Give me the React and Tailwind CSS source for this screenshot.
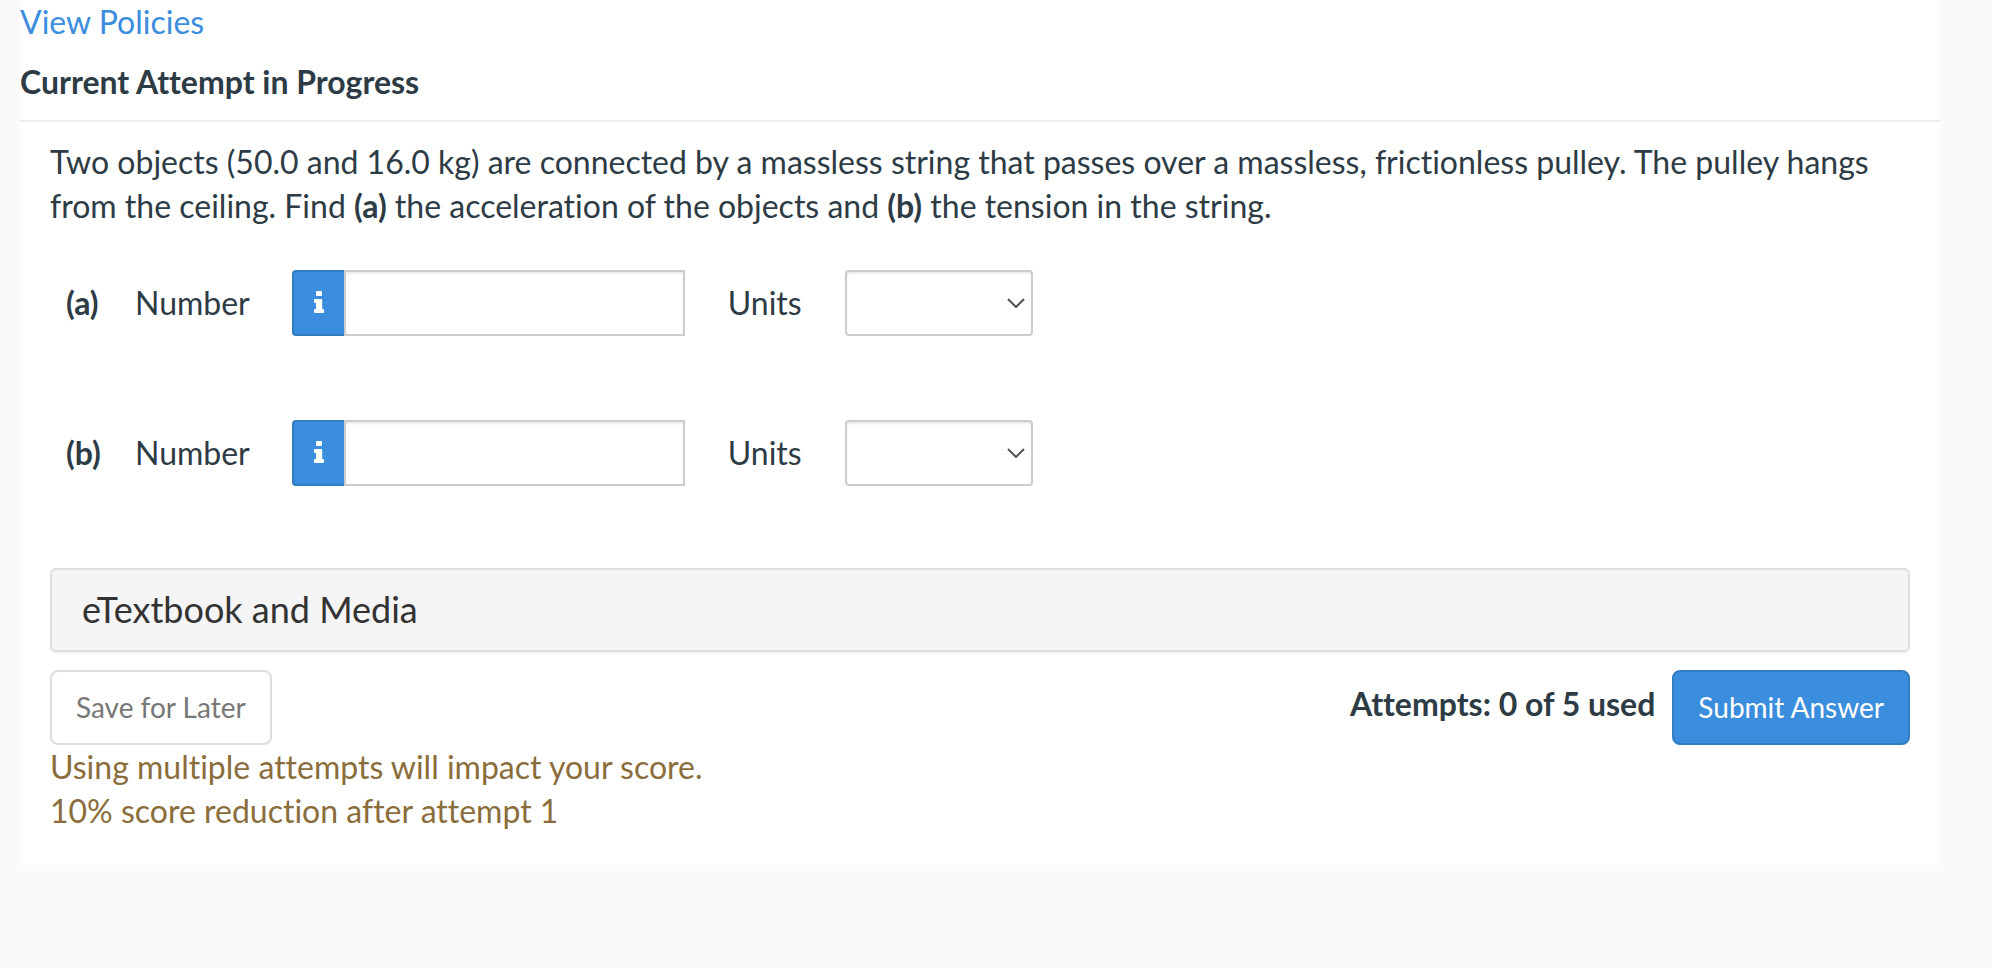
const parts = [
    { id: 'a', label: '(a)' },
    { id: 'b', label: '(b)' },
];

function InfoIcon() {
    return (
        <svg aria-hidden="true" viewBox="0 0 10 22" className="h-[22px] w-[10px] fill-white">
            <rect x="2" y="0" width="6" height="5" rx="1" />
            <path d="M1 8h6.4a.8.8 0 0 1 .8.8V18H9a1 1 0 0 1 1 1v2a1 1 0 0 1-1 1H1a1 1 0 0 1-1-1v-2a1 1 0 0 1 1-1h1v-6H1a1 1 0 0 1-1-1V9a1 1 0 0 1 1-1z" />
        </svg>
    );
}

function AnswerRow({ id, label }) {
    return (
        <div className="flex h-[66px] items-center pl-4">
            <strong className="w-[69px] font-bold">{label}</strong>
            <label htmlFor={`number-${id}`}>Number</label>

            <div className="ml-[42px] flex h-full">
                <button
                    type="button"
                    aria-label="Answer format information"
                    className="flex w-[52px] items-center justify-center rounded-l border-2 border-r-0 border-[#317dc1] bg-[#3b8ddd] pb-0.5"
                >
                    <InfoIcon />
                </button>
                <input
                    id={`number-${id}`}
                    type="text"
                    className="w-[341px] border-2 border-[#ccc] bg-white px-3 shadow-[inset_0_2px_2px_rgba(0,0,0,0.075)]"
                />
            </div>

            <label htmlFor={`units-${id}`} className="mx-[43px]">Units</label>

            <div className="relative h-full w-[188px]">
                <select
                    id={`units-${id}`}
                    className="h-full w-full appearance-none rounded border-2 border-[#ccc] bg-white px-3 shadow-[inset_0_2px_2px_rgba(0,0,0,0.075)]"
                >
                    <option value="" />
                    <option value="m/s2">m/s²</option>
                    <option value="N">N</option>
                </select>
                <svg
                    aria-hidden="true"
                    viewBox="0 0 18 10"
                    className="pointer-events-none absolute top-7 right-2 h-[10px] w-[18px] fill-none stroke-[#555] stroke-2"
                >
                    <path d="M1 1l8 8 8-8" />
                </svg>
            </div>
        </div>
    );
}

export default function App() {
    return (
        <div className="min-h-screen bg-[#fafafa] pr-[52px] pl-5 font-['Lato',sans-serif] text-[32px] leading-[44px] text-[#2d3b45] [font-variant-ligatures:none]">
            <main className="bg-white pb-8">
                <a href="#policies" className="block w-fit text-[#3b8ddd]">View Policies</a>
                <h1 className="mt-4 border-b-2 border-[#ededed] pb-4 font-bold">Current Attempt in Progress</h1>

                <div className="px-[30px] pt-[18px]">
                    <p>
                        Two objects (50.0 and 16.0 kg) are connected by a massless string that passes over a massless,
                        frictionless pulley. The pulley hangs from the ceiling. Find <strong className="font-bold">(a)</strong> the
                        acceleration of the objects and <strong className="font-bold">(b)</strong> the tension in the string.
                    </p>

                    <form className="mt-[42px]" onSubmit={(e) => e.preventDefault()}>
                        <div className="flex flex-col gap-[84px]">
                            {parts.map((part) => (
                                <AnswerRow key={part.id} {...part} />
                            ))}
                        </div>

                        <button
                            type="button"
                            className="mt-[82px] h-[84px] w-full rounded-md border-2 border-[#ddd] bg-[#f5f5f5] px-[30px] pb-0.5 text-left text-[36px] text-[#333] shadow-[0_2px_2px_rgba(0,0,0,0.05)]"
                        >
                            eTextbook and Media
                        </button>

                        <div className="mt-[18px] flex items-start justify-between">
                            <button
                                type="button"
                                className="h-[75px] rounded-lg border-2 border-[#ddd] bg-white px-6 pb-0.5 text-[28px] text-[#777]"
                            >
                                Save for Later
                            </button>
                            <div className="flex items-start gap-[17px]">
                                <strong className="mt-3 font-bold">Attempts: 0 of 5 used</strong>
                                <button
                                    type="submit"
                                    className="h-[75px] rounded-lg border-2 border-[#317dc1] bg-[#3b8ddd] px-6 pb-0.5 text-[28px] text-white"
                                >
                                    Submit Answer
                                </button>
                            </div>
                        </div>
                    </form>

                    <p className="text-[#8a6d3b]">Using multiple attempts will impact your score.</p>
                    <p className="text-[#8a6d3b]">10% score reduction after attempt 1</p>
                </div>
            </main>
        </div>
    );
}
